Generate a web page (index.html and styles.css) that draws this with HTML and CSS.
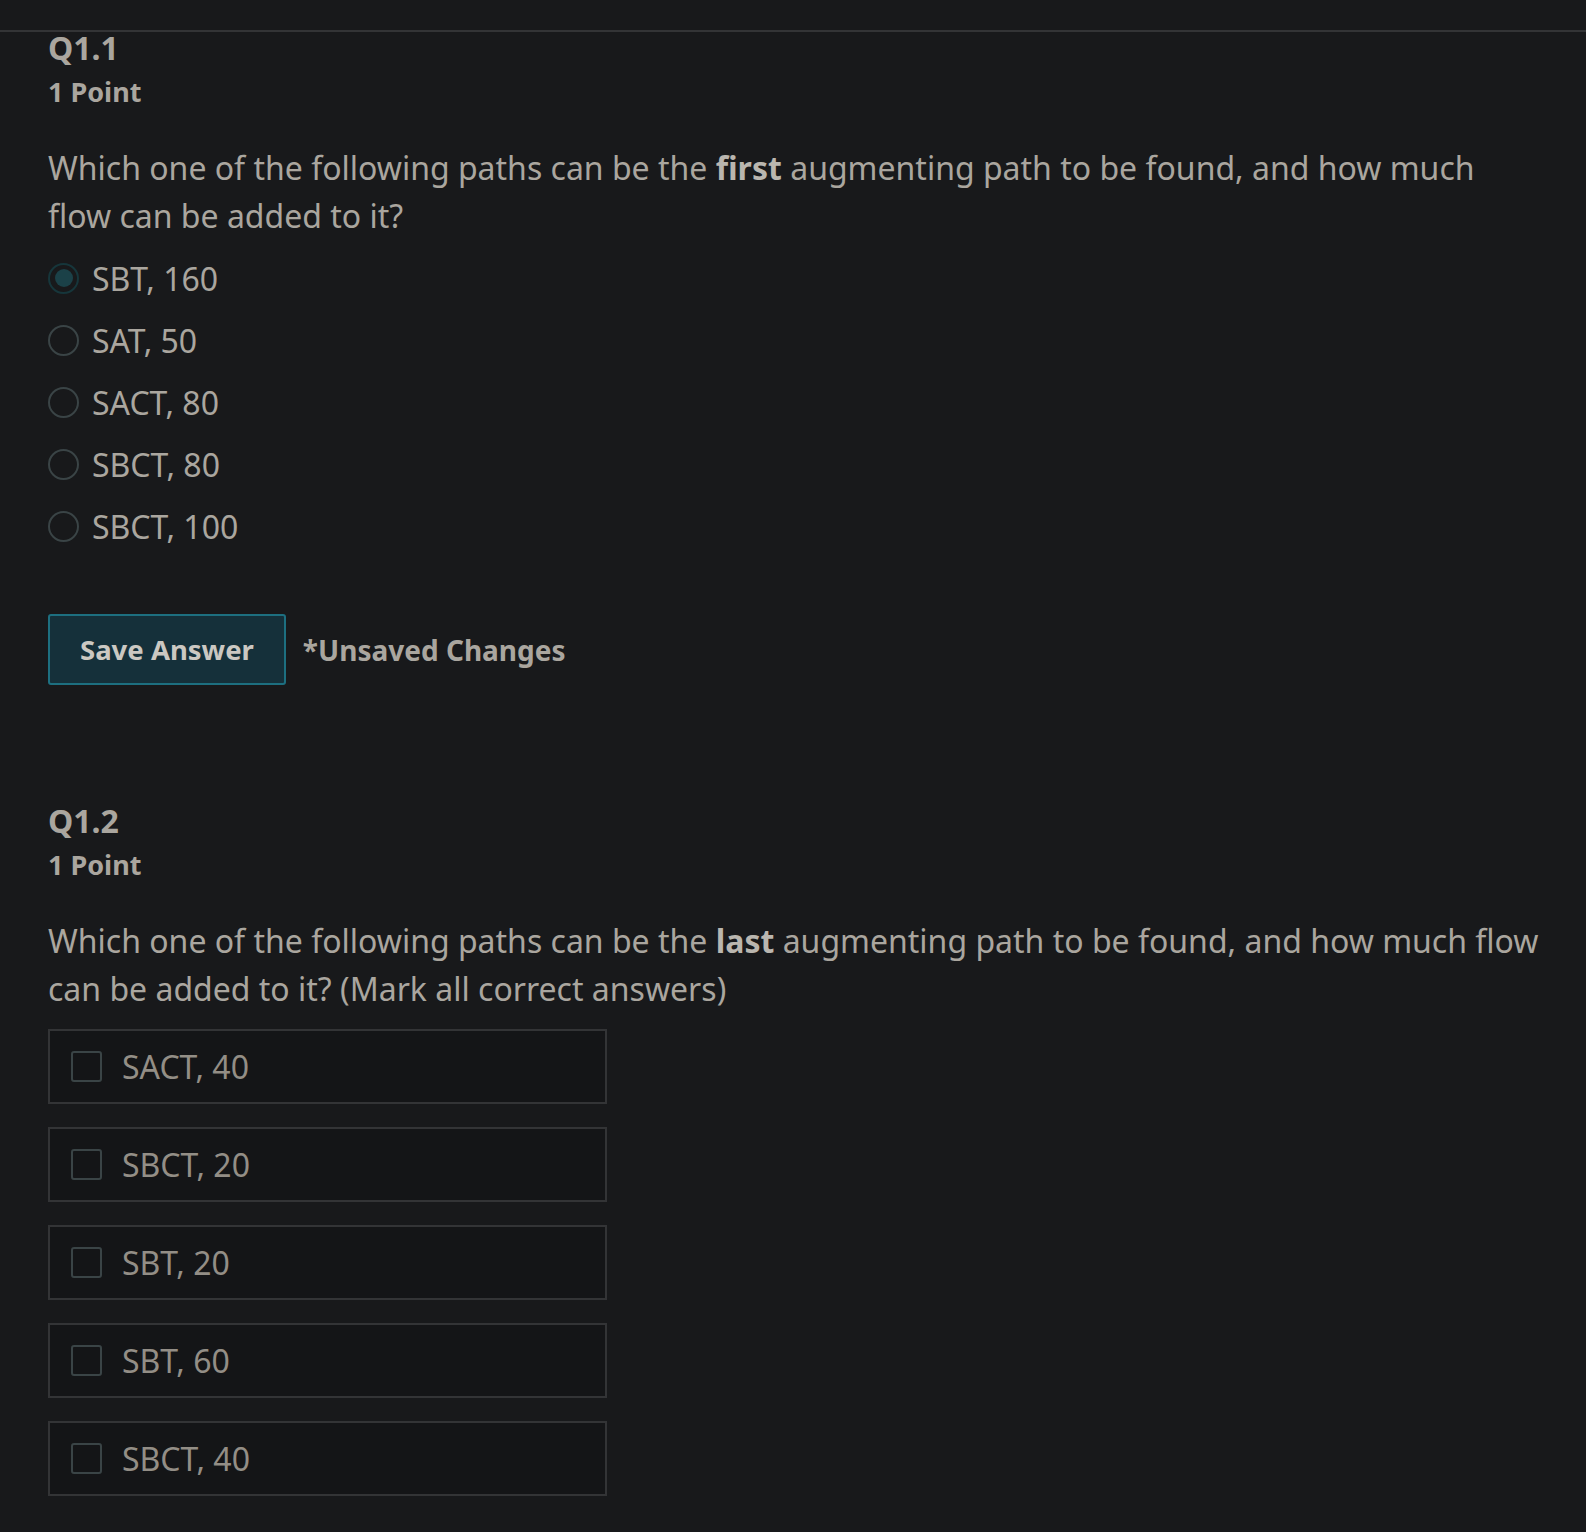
FILE: index.html
```html
<!DOCTYPE html>
<html lang="en">
<head>
    <meta charset="UTF-8">
    <meta name="viewport" content="width=device-width, initial-scale=1.0">
    <title>Q1 - Max Flow</title>
    <link rel="stylesheet" href="styles.css">
</head>
<body>
    <div class="topbar"></div>

    <div class="question">
        <h2 class="question-title">Q1.1</h2>
        <div class="question-points">1 Point</div>
        <p class="question-text">Which one of the following paths can be the <strong>first</strong> augmenting path to be found, and how much flow can be added to it?</p>
        <div class="radio-list">
            <label class="radio-option"><input type="radio" name="q11" checked> SBT, 160</label>
            <label class="radio-option"><input type="radio" name="q11"> SAT, 50</label>
            <label class="radio-option"><input type="radio" name="q11"> SACT, 80</label>
            <label class="radio-option"><input type="radio" name="q11"> SBCT, 80</label>
            <label class="radio-option"><input type="radio" name="q11"> SBCT, 100</label>
        </div>
        <div class="save-row">
            <button class="save-btn">Save Answer</button>
            <span class="unsaved">*Unsaved Changes</span>
        </div>
    </div>

    <div class="question second">
        <h2 class="question-title">Q1.2</h2>
        <div class="question-points">1 Point</div>
        <p class="question-text">Which one of the following paths can be the <strong>last</strong> augmenting path to be found, and how much flow can be added to it? (Mark all correct answers)</p>
        <div class="check-list">
            <label class="check-option"><input type="checkbox"> SACT, 40</label>
            <label class="check-option"><input type="checkbox"> SBCT, 20</label>
            <label class="check-option"><input type="checkbox"> SBT, 20</label>
            <label class="check-option"><input type="checkbox"> SBT, 60</label>
            <label class="check-option"><input type="checkbox"> SBCT, 40</label>
        </div>
    </div>
</body>
</html>
```

FILE: styles.css
```css
body {
    margin: 0;
    background-color: #18191b;
    color: #aaa69f;
    font-family: "Noto Sans", "Open Sans", sans-serif;
}
.topbar {
    height: 30px;
    border-bottom: 2px solid #333436;
}
.question {
    padding: 0 42px 0 48px;
}
.question.second {
    margin-top: 120px;
}
.question-title {
    margin: 0;
    font-size: 32px;
    line-height: 32px;
    font-weight: bold;
}
.question-points {
    margin-top: 10px;
    font-size: 27px;
    line-height: 36px;
    font-weight: bold;
}
.question-text {
    margin: 34px 0 0 0;
    font-size: 32px;
    line-height: 47.5px;
}
.question-text strong {
    color: #bab6af;
}
.radio-list {
    margin-top: 8px;
}
.radio-option {
    display: flex;
    align-items: center;
    gap: 13px;
    height: 62px;
    font-size: 32px;
}
.radio-option input {
    appearance: none;
    margin: 0;
    width: 31px;
    height: 31px;
    border: 2px solid #3a4446;
    border-radius: 50%;
    display: flex;
    align-items: center;
    justify-content: center;
}
.radio-option input:checked {
    border-color: #16363b;
}
.radio-option input:checked::after {
    content: "";
    width: 18px;
    height: 18px;
    border-radius: 50%;
    background-color: #1b4148;
}
.save-row {
    display: flex;
    align-items: center;
    gap: 17px;
    margin-top: 57px;
}
.save-btn {
    height: 71px;
    padding: 0 30px;
    background-color: #15303a;
    border: 2px solid #1d6f80;
    border-radius: 3px;
    color: #cbc8c2;
    font-family: inherit;
    font-size: 27.5px;
    font-weight: bold;
}
.unsaved {
    font-size: 28px;
    font-weight: bold;
}
.check-list {
    display: flex;
    flex-direction: column;
    gap: 23px;
    margin-top: 17px;
    width: 559px;
}
.check-option {
    display: flex;
    align-items: center;
    gap: 20px;
    height: 75px;
    box-sizing: border-box;
    padding-left: 21px;
    border: 2px solid #333436;
    background-color: #141517;
    color: #938e86;
    font-size: 32px;
}
.check-option input {
    appearance: none;
    margin: 0;
    width: 31px;
    height: 31px;
    border: 2px solid #3a4446;
    border-radius: 3px;
}
```
